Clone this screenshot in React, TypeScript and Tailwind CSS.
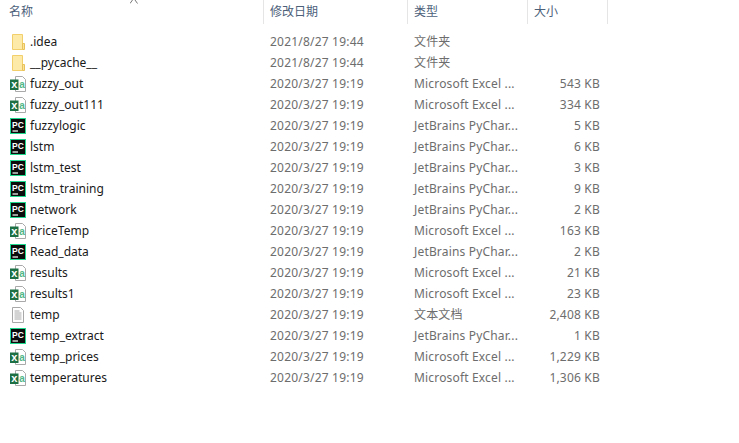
import React from 'react';

type Kind = 'folder' | 'excel' | 'py' | 'text';

const rows: { name: string; date: string; type: string; size: string; kind: Kind }[] = [
  { name: '.idea', date: '2021/8/27 19:44', type: '文件夹', size: '', kind: 'folder' },
  { name: '__pycache__', date: '2021/8/27 19:44', type: '文件夹', size: '', kind: 'folder' },
  { name: 'fuzzy_out', date: '2020/3/27 19:19', type: 'Microsoft Excel ...', size: '543 KB', kind: 'excel' },
  { name: 'fuzzy_out111', date: '2020/3/27 19:19', type: 'Microsoft Excel ...', size: '334 KB', kind: 'excel' },
  { name: 'fuzzylogic', date: '2020/3/27 19:19', type: 'JetBrains PyChar...', size: '5 KB', kind: 'py' },
  { name: 'lstm', date: '2020/3/27 19:19', type: 'JetBrains PyChar...', size: '6 KB', kind: 'py' },
  { name: 'lstm_test', date: '2020/3/27 19:19', type: 'JetBrains PyChar...', size: '3 KB', kind: 'py' },
  { name: 'lstm_training', date: '2020/3/27 19:19', type: 'JetBrains PyChar...', size: '9 KB', kind: 'py' },
  { name: 'network', date: '2020/3/27 19:19', type: 'JetBrains PyChar...', size: '2 KB', kind: 'py' },
  { name: 'PriceTemp', date: '2020/3/27 19:19', type: 'Microsoft Excel ...', size: '163 KB', kind: 'excel' },
  { name: 'Read_data', date: '2020/3/27 19:19', type: 'JetBrains PyChar...', size: '2 KB', kind: 'py' },
  { name: 'results', date: '2020/3/27 19:19', type: 'Microsoft Excel ...', size: '21 KB', kind: 'excel' },
  { name: 'results1', date: '2020/3/27 19:19', type: 'Microsoft Excel ...', size: '23 KB', kind: 'excel' },
  { name: 'temp', date: '2020/3/27 19:19', type: '文本文档', size: '2,408 KB', kind: 'text' },
  { name: 'temp_extract', date: '2020/3/27 19:19', type: 'JetBrains PyChar...', size: '1 KB', kind: 'py' },
  { name: 'temp_prices', date: '2020/3/27 19:19', type: 'Microsoft Excel ...', size: '1,229 KB', kind: 'excel' },
  { name: 'temperatures', date: '2020/3/27 19:19', type: 'Microsoft Excel ...', size: '1,306 KB', kind: 'excel' },
];

const FileIcon = ({ kind }: { kind: Kind }) => {
  if (kind === 'folder') {
    return (
      <svg width="16" height="16" viewBox="0 0 16 16" className="block">
        <path d="M2.500 .5h10v15h-10z" fill="#fdeaa8" stroke="#f2cf6a" />
        <path d="M12.500 9.500h2v6h-2z" fill="#fbe29a" stroke="#e8c258" />
      </svg>
    );
  }
  if (kind === 'excel') {
    return (
      <svg width="16" height="16" viewBox="0 0 16 16" className="block">
        <path d="M5.500 .5h7l3 3v12h-10z" fill="#fff" stroke="#a9a9a9" />
        <rect x="0" y="3.500" width="8.500" height="10.500" fill="#1d7044" />
        <text x="4.200" y="12" textAnchor="middle" fontSize="11" fontWeight="700" fill="#fff" fontFamily="Liberation Sans, sans-serif">x</text>
        <text x="12" y="12" textAnchor="middle" fontSize="10" fontWeight="700" fill="#52b788" fontFamily="Liberation Sans, sans-serif">a</text>
      </svg>
    );
  }
  if (kind === 'py') {
    return (
      <svg width="16" height="16" viewBox="0 0 16 16" className="block">
        <rect x="0.500" y="0.500" width="15" height="15" fill="#0c0c0c" stroke="#1fd98e" />
        <text x="8" y="9.500" textAnchor="middle" fontSize="8.500" fontWeight="700" fill="#fff" fontFamily="Liberation Sans, sans-serif">PC</text>
        <path d="M2.500 13h5.500" stroke="#fff" strokeWidth="1.200" />
      </svg>
    );
  }
  return (
    <svg width="16" height="16" viewBox="0 0 16 16" className="block">
      <path d="M2.500 .5h8l3 3v12h-11z" fill="#fff" stroke="#a8a8a8" />
      <path d="M4.500 4h5M4.500 6h7M4.500 8h7M4.500 10h7M4.500 12h7" stroke="#a8a8a8" />
    </svg>
  );
};

export default function App() {
  return (
    <div className="relative h-[443px] w-[739px] overflow-hidden bg-white text-[12px] [font-family:'Noto_Sans','Noto_Sans_CJK_SC',sans-serif]">
      <svg width="8" height="4" viewBox="0 0 8 4" className="absolute left-[130px] top-0">
        <path d="M0 3.500L2.500 0M7.500 3.500L5 0" stroke="#777" strokeWidth="1" fill="none" />
      </svg>
      <div className="flex h-[24px] text-[#4c607a]">
        <div className="w-[264px] border-r border-[#e5e5e5] pl-[9px] leading-[23px]">名称</div>
        <div className="w-[144px] border-r border-[#e5e5e5] pl-[6px] leading-[23px]">修改日期</div>
        <div className="w-[120px] border-r border-[#e5e5e5] pl-[6px] leading-[23px]">类型</div>
        <div className="w-[80px] border-r border-[#e5e5e5] pl-[6px] leading-[23px]">大小</div>
      </div>
      <div className="mt-[7px]">
        {rows.map((row) => (
          <div key={row.name} className="flex h-[21px] items-center leading-[21px]">
            <div className="flex w-[264px] items-center pl-[10px] pr-2 text-[#1a1a1a]">
              <FileIcon kind={row.kind} />
              <span className="ml-[4px]">{row.name}</span>
            </div>
            <div className="w-[144px] pl-[6px] tracking-[0.2px] text-[#6d6d6d]">{row.date}</div>
            <div className="w-[120px] pl-[6px] tracking-[0.17px] text-[#6d6d6d]">{row.type}</div>
            <div className="w-[72px] text-right tracking-[0.2px] text-[#6d6d6d]">{row.size}</div>
          </div>
        ))}
      </div>
    </div>
  );
}
